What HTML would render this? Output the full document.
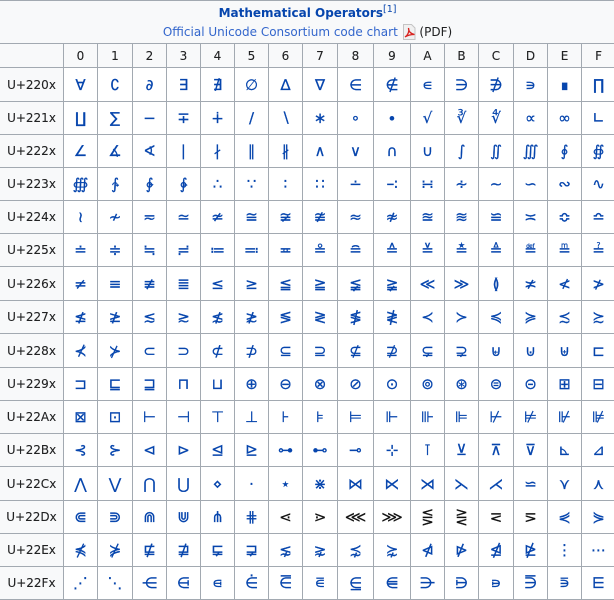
<!DOCTYPE html>
<html><head><meta charset="utf-8">
<style>
html,body{margin:0;padding:0;background:#fff;width:614px;height:600px;overflow:hidden}
table{border-collapse:separate;border-spacing:0;table-layout:fixed;width:615px;font-family:"DejaVu Sans",sans-serif;font-size:12px;color:#202122;position:absolute;left:0;top:0}
td,th{border-left:1px solid #a2a9b1;border-top:1px solid #a2a9b1;padding:0;text-align:center;box-sizing:border-box;font-weight:normal;overflow:visible;white-space:nowrap}
th{background:#f8f9fa;-webkit-text-stroke:.1px}
td{font-size:15px;color:#0645ad;background:#fff;-webkit-text-stroke:.25px}
tr>:first-child{border-left:0}
.cap{height:43px;line-height:19px;background:#f8f9fa;vertical-align:middle;padding-top:1px;-webkit-text-stroke:0}
.cap b{font-weight:bold;color:#0645ad;font-size:12px}
.cap sup{font-size:9.500px;color:#0645ad;line-height:0}
.cap a{color:#3366cc}
.cap svg{vertical-align:-4px}
.k td{color:#111;-webkit-text-stroke:.18px}
.k td.b{color:#0645ad;-webkit-text-stroke:.25px}
</style></head><body>
<table>
<colgroup><col style="width:63px"><col style="width:34px"><col style="width:35px"><col style="width:34px"><col style="width:34px"><col style="width:34px"><col style="width:34px"><col style="width:34px"><col style="width:35px"><col style="width:36px"><col style="width:37px"><col style="width:34px"><col style="width:34px"><col style="width:35px"><col style="width:34px"><col style="width:34px"><col style="width:34px"></colgroup>
<tr><th colspan="17" class="cap"><b>Mathematical Operators</b><sup>[1]</sup><br><a>Official Unicode Consortium code chart</a> <svg width="14" height="16" viewBox="0 0 14 16"><path d="M1.500.5h8l3.500 3.500v11.500h-11.500z" fill="#f0f0f0" stroke="#c4c4c4"/><path d="M3 13c3-2 4.500-5.500 3.500-9 0 3.500 2.500 6 6 6.500-3.500 0-7 .8-9.500 2.500z" fill="none" stroke="#d8231f" stroke-width="1.300"/></svg> (PDF)</th></tr>
<tr style="height:24px"><th></th><th>0</th><th>1</th><th>2</th><th>3</th><th>4</th><th>5</th><th>6</th><th>7</th><th>8</th><th>9</th><th>A</th><th>B</th><th>C</th><th>D</th><th>E</th><th>F</th></tr>
<tr style="height:34px"><th>U+220x</th><td>∀</td><td>∁</td><td>∂</td><td>∃</td><td>∄</td><td>∅</td><td>∆</td><td>∇</td><td>∈</td><td>∉</td><td>∊</td><td>∋</td><td>∌</td><td>∍</td><td>∎</td><td>∏</td></tr>
<tr style="height:33px"><th>U+221x</th><td>∐</td><td>∑</td><td>−</td><td>∓</td><td>∔</td><td>∕</td><td>∖</td><td>∗</td><td>∘</td><td>∙</td><td>√</td><td>∛</td><td>∜</td><td>∝</td><td>∞</td><td>∟</td></tr>
<tr style="height:33px"><th>U+222x</th><td>∠</td><td>∡</td><td>∢</td><td>∣</td><td>∤</td><td>∥</td><td>∦</td><td>∧</td><td>∨</td><td>∩</td><td>∪</td><td>∫</td><td>∬</td><td>∭</td><td>∮</td><td>∯</td></tr>
<tr style="height:33px"><th>U+223x</th><td>∰</td><td>∱</td><td>∲</td><td>∳</td><td>∴</td><td>∵</td><td>∶</td><td>∷</td><td>∸</td><td>∹</td><td>∺</td><td>∻</td><td>∼</td><td>∽</td><td>∾</td><td>∿</td></tr>
<tr style="height:33px"><th>U+224x</th><td>≀</td><td>≁</td><td>≂</td><td>≃</td><td>≄</td><td>≅</td><td>≆</td><td>≇</td><td>≈</td><td>≉</td><td>≊</td><td>≋</td><td>≌</td><td>≍</td><td>≎</td><td>≏</td></tr>
<tr style="height:33px"><th>U+225x</th><td>≐</td><td>≑</td><td>≒</td><td>≓</td><td>≔</td><td>≕</td><td>≖</td><td>≗</td><td>≘</td><td>≙</td><td>≚</td><td>≛</td><td>≜</td><td>≝</td><td>≞</td><td>≟</td></tr>
<tr style="height:34px"><th>U+226x</th><td>≠</td><td>≡</td><td>≢</td><td>≣</td><td>≤</td><td>≥</td><td>≦</td><td>≧</td><td>≨</td><td>≩</td><td>≪</td><td>≫</td><td>≬</td><td>≭</td><td>≮</td><td>≯</td></tr>
<tr style="height:33px"><th>U+227x</th><td>≰</td><td>≱</td><td>≲</td><td>≳</td><td>≴</td><td>≵</td><td>≶</td><td>≷</td><td>≸</td><td>≹</td><td>≺</td><td>≻</td><td>≼</td><td>≽</td><td>≾</td><td>≿</td></tr>
<tr style="height:34px"><th>U+228x</th><td>⊀</td><td>⊁</td><td>⊂</td><td>⊃</td><td>⊄</td><td>⊅</td><td>⊆</td><td>⊇</td><td>⊈</td><td>⊉</td><td>⊊</td><td>⊋</td><td>⊌</td><td>⊍</td><td>⊎</td><td>⊏</td></tr>
<tr style="height:33px"><th>U+229x</th><td>⊐</td><td>⊑</td><td>⊒</td><td>⊓</td><td>⊔</td><td>⊕</td><td>⊖</td><td>⊗</td><td>⊘</td><td>⊙</td><td>⊚</td><td>⊛</td><td>⊜</td><td>⊝</td><td>⊞</td><td>⊟</td></tr>
<tr style="height:33px"><th>U+22Ax</th><td>⊠</td><td>⊡</td><td>⊢</td><td>⊣</td><td>⊤</td><td>⊥</td><td>⊦</td><td>⊧</td><td>⊨</td><td>⊩</td><td>⊪</td><td>⊫</td><td>⊬</td><td>⊭</td><td>⊮</td><td>⊯</td></tr>
<tr style="height:33px"><th>U+22Bx</th><td>⊰</td><td>⊱</td><td>⊲</td><td>⊳</td><td>⊴</td><td>⊵</td><td>⊶</td><td>⊷</td><td>⊸</td><td>⊹</td><td>⊺</td><td>⊻</td><td>⊼</td><td>⊽</td><td>⊾</td><td>⊿</td></tr>
<tr style="height:34px"><th>U+22Cx</th><td>⋀</td><td>⋁</td><td>⋂</td><td>⋃</td><td>⋄</td><td>⋅</td><td>⋆</td><td>⋇</td><td>⋈</td><td>⋉</td><td>⋊</td><td>⋋</td><td>⋌</td><td>⋍</td><td>⋎</td><td>⋏</td></tr>
<tr style="height:33px" class="k"><th>U+22Dx</th><td class="b">⋐</td><td class="b">⋑</td><td class="b">⋒</td><td class="b">⋓</td><td class="b">⋔</td><td class="b">⋕</td><td>⋖</td><td>⋗</td><td>⋘</td><td>⋙</td><td>⋚</td><td>⋛</td><td>⋜</td><td>⋝</td><td class="b">⋞</td><td class="b">⋟</td></tr>
<tr style="height:33px"><th>U+22Ex</th><td>⋠</td><td>⋡</td><td>⋢</td><td>⋣</td><td>⋤</td><td>⋥</td><td>⋦</td><td>⋧</td><td>⋨</td><td>⋩</td><td>⋪</td><td>⋫</td><td>⋬</td><td>⋭</td><td>⋮</td><td>⋯</td></tr>
<tr style="height:33px"><th>U+22Fx</th><td>⋰</td><td>⋱</td><td>⋲</td><td>⋳</td><td>⋴</td><td>⋵</td><td>⋶</td><td>⋷</td><td>⋸</td><td>⋹</td><td>⋺</td><td>⋻</td><td>⋼</td><td>⋽</td><td>⋾</td><td>⋿</td></tr>
</table>
<div style="position:absolute;left:0;top:599px;width:614px;height:1px;background:#a2a9b1"></div>
</body></html>
